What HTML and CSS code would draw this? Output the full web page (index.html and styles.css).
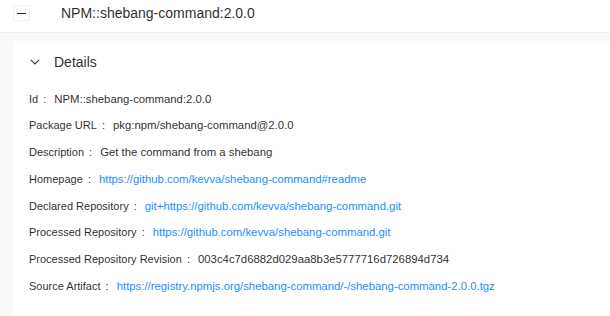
FILE: index.html
```html
<!DOCTYPE html>
<html>
<head>
<meta charset="utf-8">
<link rel="stylesheet" href="styles.css">
</head>
<body>
<div class="row-head">
  <button class="expand" aria-label="collapse"><span class="minus"></span></button>
  <span class="title">NPM::shebang-command:2.0.0</span>
</div>
<div class="expanded">
  <div class="card">
    <div class="panel-head">
      <svg class="chev" width="10" height="6" viewBox="0 0 10 6"><polyline points="0.8,0.8 5,5 9.2,0.8" fill="none" stroke="#333" stroke-width="1.1"/></svg>
      <span class="panel-title">Details</span>
    </div>
    <div class="items">
      <div class="item"><span class="label">Id</span><span class="value">NPM::shebang-command:2.0.0</span></div>
      <div class="item"><span class="label">Package URL</span><span class="value">pkg:npm/shebang-command@2.0.0</span></div>
      <div class="item"><span class="label">Description</span><span class="value">Get the command from a shebang</span></div>
      <div class="item"><span class="label">Homepage</span><a class="link" href="#">https://github.com/kevva/shebang-command#readme</a></div>
      <div class="item"><span class="label">Declared Repository</span><a class="link" href="#">git+https://github.com/kevva/shebang-command.git</a></div>
      <div class="item"><span class="label">Processed Repository</span><a class="link" href="#">https://github.com/kevva/shebang-command.git</a></div>
      <div class="item"><span class="label">Processed Repository Revision</span><span class="value">003c4c7d6882d029aa8b3e5777716d726894d734</span></div>
      <div class="item"><span class="label">Source Artifact</span><a class="link" href="#">https://registry.npmjs.org/shebang-command/-/shebang-command-2.0.0.tgz</a></div>
    </div>
  </div>
</div>
</body>
</html>
```
FILE: styles.css
```css
html, body {
  margin: 0;
  padding: 0;
  background: #fff;
  font-family: "Liberation Sans", Arial, sans-serif;
  color: rgba(0, 0, 0, 0.85);
  overflow: hidden;
  height: 100%;
}
body {
  display: flex;
  flex-direction: column;
}
.row-head {
  display: flex;
  align-items: flex-start;
  height: 32px;
  flex: none;
  border-bottom: 1px solid #f0f0f0;
  box-sizing: content-box;
}
.expand {
  margin: 5px 0 0 13px;
  width: 17px;
  height: 16px;
  padding: 0;
  border: 1px solid #f0f0f0;
  border-radius: 2px;
  background: #fff;
  display: flex;
  align-items: center;
  justify-content: center;
  box-sizing: border-box;
}
.minus {
  display: block;
  width: 9px;
  height: 1px;
  background: #222;
}
.title {
  margin-left: 31px;
  padding-top: 1.5px;
  font-size: 14px;
  line-height: 22px;
}
.expanded {
  flex: 1;
  min-height: 0;
  display: flex;
  background: #fafafa;
  padding: 8px 0 0 13px;
}
.card {
  flex: 1;
  background: #fff;
  padding: 10px 0 0 16px;
  overflow: hidden;
}
.panel-head {
  display: flex;
  align-items: center;
  height: 22px;
}
.chev {
  margin-left: 1px;
  display: block;
}
.panel-title {
  margin-left: 14px;
  font-size: 14px;
  line-height: 22px;
}
.items {
  margin-top: 12.8px;
}
.item {
  height: 26.7px;
  line-height: 26.7px;
  font-size: 11px;
  white-space: nowrap;
}
.label::after {
  content: " :";
  margin: 0 8px 0 2px;
}
.value,
.link {
  font-size: 11.35px;
}
.value {
  color: rgba(0, 0, 0, 0.85);
}
.link {
  color: #1890ff;
  text-decoration: none;
}
```
